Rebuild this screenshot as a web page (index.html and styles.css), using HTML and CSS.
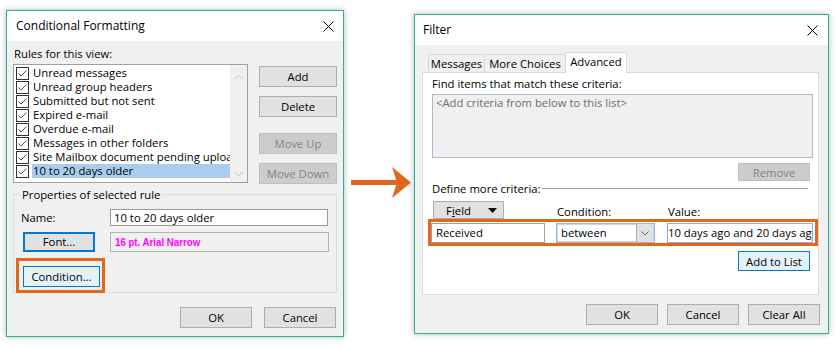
FILE: index.html
```html
<!DOCTYPE html>
<html>
<head>
<meta charset="utf-8">
<link rel="stylesheet" href="styles.css">
</head>
<body>
<div class="stage">
  <div class="dlg dlg-cf">
    <div class="titlebar">
      <span class="title">Conditional Formatting</span>
      <svg class="close" width="11" height="11" viewBox="0 0 11 11"><path d="M0.5 0.5 L10.5 10.5 M10.5 0.5 L0.5 10.5" stroke="#000" stroke-width="1" fill="none"/></svg>
    </div>
    <div class="cf-body">
      <div class="rules-lbl">Rules for this view:</div>
      <div class="rules-row">
        <div class="listbox">
          <ul class="items">
            <li><span class="chk"><svg width="11" height="11" viewBox="0 0 11 11"><path d="M1.5 5.5 L4 8 L9.5 2.5" stroke="#555" fill="none"/></svg></span><span class="txt">Unread messages</span></li>
            <li><span class="chk"><svg width="11" height="11" viewBox="0 0 11 11"><path d="M1.5 5.5 L4 8 L9.5 2.5" stroke="#555" fill="none"/></svg></span><span class="txt">Unread group headers</span></li>
            <li><span class="chk"><svg width="11" height="11" viewBox="0 0 11 11"><path d="M1.5 5.5 L4 8 L9.5 2.5" stroke="#555" fill="none"/></svg></span><span class="txt">Submitted but not sent</span></li>
            <li><span class="chk"><svg width="11" height="11" viewBox="0 0 11 11"><path d="M1.5 5.5 L4 8 L9.5 2.5" stroke="#555" fill="none"/></svg></span><span class="txt">Expired e-mail</span></li>
            <li><span class="chk"><svg width="11" height="11" viewBox="0 0 11 11"><path d="M1.5 5.5 L4 8 L9.5 2.5" stroke="#555" fill="none"/></svg></span><span class="txt">Overdue e-mail</span></li>
            <li><span class="chk"><svg width="11" height="11" viewBox="0 0 11 11"><path d="M1.5 5.5 L4 8 L9.5 2.5" stroke="#555" fill="none"/></svg></span><span class="txt">Messages in other folders</span></li>
            <li><span class="chk"><svg width="11" height="11" viewBox="0 0 11 11"><path d="M1.5 5.5 L4 8 L9.5 2.5" stroke="#555" fill="none"/></svg></span><span class="txt">Site Mailbox document pending upload</span></li>
            <li class="sel"><span class="chk"><svg width="11" height="11" viewBox="0 0 11 11"><path d="M1.5 5.5 L4 8 L9.5 2.5" stroke="#555" fill="none"/></svg></span><span class="txt">10 to 20 days older</span></li>
          </ul>
          <div class="vscroll">
            <svg width="9" height="6" viewBox="0 0 9 6"><path d="M0.5 5 L4.5 1 L8.5 5" stroke="#c2c2c2" fill="none"/></svg>
            <svg width="9" height="6" viewBox="0 0 9 6"><path d="M0.5 1 L4.5 5 L8.5 1" stroke="#c2c2c2" fill="none"/></svg>
          </div>
        </div>
        <div class="side-btns">
          <button class="btn b-add">Add</button>
          <button class="btn b-del">Delete</button>
          <button class="btn dis b-up">Move Up</button>
          <button class="btn dis b-down">Move Down</button>
        </div>
      </div>
      <fieldset class="group">
        <legend>Properties of selected rule</legend>
        <div class="prop-row name-row">
          <span class="plbl">Name:</span>
          <div class="edit">10 to 20 days older</div>
        </div>
        <div class="prop-row font-row">
          <span class="pcell"><button class="btn focus b-font">Font...</button></span>
          <div class="fontbox"><span class="narrow">16 pt. Arial Narrow</span></div>
        </div>
        <div class="hl-box cond-hl"><button class="btn def b-cond">Condition...</button></div>
      </fieldset>
      <div class="footer cf-footer">
        <button class="btn fbtn">OK</button>
        <button class="btn fbtn">Cancel</button>
      </div>
    </div>
  </div>

  <div class="arrow">
    <svg width="70" height="40" viewBox="0 0 70 40">
      <rect x="7" y="18" width="47" height="5" fill="#e2661b"/>
      <path d="M48 5 L67 20.5 L48 36 L53 20.5 Z" fill="#e2661b"/>
    </svg>
  </div>

  <div class="dlg dlg-filter">
    <div class="titlebar">
      <span class="title">Filter</span>
      <svg class="close" width="11" height="11" viewBox="0 0 11 11"><path d="M0.5 0.5 L10.5 10.5 M10.5 0.5 L0.5 10.5" stroke="#000" stroke-width="1" fill="none"/></svg>
    </div>
    <div class="f-body">
      <div class="tabs">
        <div class="tab t-msg">Messages</div>
        <div class="tab t-more">More Choices</div>
        <div class="tab active t-adv">Advanced</div>
      </div>
      <div class="panel">
        <div class="find-lbl">Find items that match these criteria:</div>
        <div class="crit-list">&lt;Add criteria from below to this list&gt;</div>
        <div class="rm-row"><button class="btn dis b-rm">Remove</button></div>
        <div class="define-row"><span>Define more criteria:</span><span class="rule"></span></div>
        <div class="hdr-row">
          <button class="btn b-field"><span class="field-txt">F<u>i</u>eld</span><svg width="9" height="5" viewBox="0 0 9 5"><path d="M0 0 L9 0 L4.5 5 Z" fill="#000"/></svg></button>
          <span class="hlbl">Condition:</span>
          <span class="hlbl">Value:</span>
        </div>
        <div class="hl-box crit-hl">
          <div class="inp inp-recv">Received</div>
          <div class="combo">
            <span class="combo-txt">between</span>
            <span class="combo-btn"><svg width="8" height="5" viewBox="0 0 8 5"><path d="M0.5 0.5 L4 4 L7.5 0.5" stroke="#606060" fill="none"/></svg></span>
          </div>
          <div class="inp inp-val">10 days ago and 20 days ago</div>
        </div>
        <div class="add-row"><button class="btn def b-addlist">Add to List</button></div>
      </div>
      <div class="footer f-footer">
        <button class="btn fbtn">OK</button>
        <button class="btn fbtn">Cancel</button>
        <button class="btn fbtn">Clear All</button>
      </div>
    </div>
  </div>
</div>
</body>
</html>
```

FILE: styles.css
```css
* { box-sizing: border-box; }

body {
  margin: 0;
  background: #ffffff;
  font-family: "Open Sans", "Noto Sans", sans-serif;
  font-size: 11.3px;
  line-height: 16px;
  color: #000;
}

.stage {
  display: flex;
  align-items: flex-start;
  padding: 10px 0 0 6px;
  width: 835px;
  height: 347px;
  overflow: hidden;
}

/* ---------- dialogs ---------- */
.dlg {
  border: 1px solid #2bb09a;
  background: #f0f0f0;
  box-shadow: 0 0 6px rgba(0, 0, 0, 0.28);
  display: flex;
  flex-direction: column;
  flex: none;
}
.dlg-cf { width: 338px; height: 327px; }
.dlg-filter { width: 415px; height: 320px; margin-top: 4px; }

.titlebar {
  flex: none;
  height: 30px;
  background: #fff;
  display: flex;
  align-items: center;
  justify-content: space-between;
  font-size: 12px;
}
.dlg-cf .titlebar { padding: 0 9px 0 9px; }
.dlg-filter .titlebar { padding: 0 10px 0 8px; }
.close { display: block; }

.arrow { width: 70px; margin-top: 152px; flex: none; }
.arrow svg { display: block; }

/* ---------- buttons ---------- */
.btn {
  font: inherit;
  margin: 0;
  padding: 0;
  border: 1px solid #adadad;
  background: #e1e1e1;
  color: #000;
  height: 21px;
  line-height: 18px;
  text-align: center;
  display: block;
}
.btn.dis { background: #cccccc; border-color: #bfbfbf; color: #838383; }
.btn.def { border-color: #0078d7; background: #e5f1fb; }
.btn.focus { border: 2px solid #0078d7; }

/* ---------- conditional formatting ---------- */
.cf-body {
  flex: 1;
  padding: 5px 6px 0 6px;
  display: flex;
  flex-direction: column;
}
.rules-lbl { height: 16px; padding-left: 1px; margin-bottom: 2px; }
.rules-row { display: flex; align-items: flex-start; height: 120px; }

.listbox {
  width: 235px;
  height: 119px;
  border: 1px solid #a0a0a0;
  background: #fff;
  display: flex;
  overflow: hidden;
}
.items {
  list-style: none;
  margin: 0;
  padding: 1px 0 0 0;
  flex: 1;
  min-width: 0;
}
.items li {
  height: 14px;
  display: flex;
  align-items: center;
}
.chk {
  flex: none;
  width: 13px;
  height: 13px;
  margin-left: 2px;
  border: 1px solid #333;
  background: #fff;
  display: flex;
}
.chk svg { display: block; }
.txt {
  flex: 1;
  min-width: 0;
  margin-left: 3px;
  padding-left: 1px;
  height: 14px;
  line-height: 14px;
  white-space: nowrap;
  overflow: hidden;
}
.items li.sel .txt { background: #a9cdee; }

.vscroll {
  flex: none;
  width: 17px;
  background: #f0f0f0;
  display: flex;
  flex-direction: column;
  justify-content: space-between;
  align-items: center;
  padding: 9px 0 5px 0;
}
.vscroll svg { display: block; }

.side-btns {
  margin-left: 11px;
  width: 78px;
  display: flex;
  flex-direction: column;
}
.side-btns .btn { width: 78px; }
.b-add { margin-top: 2px; }
.b-del { margin-top: 9px; }
.b-up { margin-top: 16px; }
.b-down { margin-top: 9px; }

.group {
  margin: 3px 0 0 0;
  padding: 0;
  border: 1px solid #dcdcdc;
  min-width: 0;
}
.group legend {
  margin-left: 6px;
  padding: 0 2px;
  line-height: 15px;
}
.prop-row {
  display: grid;
  grid-template-columns: 96px 218px;
  align-items: center;
}
.name-row { margin-top: 7px; height: 17px; }
.plbl { padding-left: 7px; }
.edit {
  height: 17px;
  border: 1px solid #9a9a9a;
  background: #fff;
  padding-left: 3px;
  line-height: 15px;
  white-space: nowrap;
}
.font-row { margin-top: 6px; height: 20px; grid-template-columns: 96px 219px; }
.b-font { margin-left: 9px; width: 72px; height: 20px; line-height: 16px; }
.fontbox {
  height: 20px;
  border: 1px solid #b4b4b4;
  background: #f0f0f0;
  padding-left: 4px;
  color: #ff00ff;
  font-family: "Liberation Sans", Arial, sans-serif;
  font-weight: bold;
  font-size: 11px;
  line-height: 18px;
  white-space: nowrap;
}
.narrow {
  display: inline-block;
  transform: scaleX(0.88);
  transform-origin: left center;
}

.hl-box { border: 3px solid #e2661b; }
.cond-hl {
  margin: 6px 0 -1px 2px;
  width: 89px;
  height: 35px;
  padding: 5px 0 0 4px;
}
.b-cond { width: 77px; height: 21px; }

.footer { display: flex; justify-content: flex-end; }
.cf-footer { margin-top: 14px; gap: 12px; padding-right: 1px; }
.fbtn { width: 72px; height: 21px; }

/* ---------- filter ---------- */
.f-body {
  flex: 1;
  padding: 7px 9px 0 7px;
  display: flex;
  flex-direction: column;
}
.tabs {
  display: flex;
  align-items: flex-end;
  height: 20px;
  margin-left: 6px;
  position: relative;
  z-index: 1;
}
.tab {
  height: 18px;
  border: 1px solid #d9d9d9;
  border-bottom: none;
  background: #f0f0f0;
  text-align: center;
  line-height: 18px;
  margin-right: -1px;
}
.t-msg { width: 57px; }
.t-more { width: 82px; }
.t-adv { width: 62px; }
.tab.active {
  height: 21px;
  margin-bottom: -1px;
  background: #fff;
  line-height: 17px;
}
.panel {
  height: 223px;
  border: 1px solid #d9d9d9;
  background: #fff;
  padding: 3px 5px 0 9px;
}
.find-lbl { height: 16px; margin-bottom: 2px; }
.crit-list {
  height: 64px;
  border: 1px solid #aab9cc;
  background: #f0f0f0;
  color: #6d6d6d;
  padding: 0 0 0 3px;
  line-height: 16px;
}
.rm-row { display: flex; justify-content: flex-end; margin-top: 5px; padding-right: 3px; }
.b-rm { width: 72px; height: 18px; line-height: 15px; }
.define-row {
  display: flex;
  align-items: center;
  height: 15px;
  line-height: 15px;
  margin-top: 0;
  padding-right: 5px;
}
.rule { flex: 1; height: 1px; background: #a0a0a0; margin-left: 1px; }

.hdr-row {
  display: grid;
  grid-template-columns: 124px 111px 1fr;
  align-items: end;
  margin-top: 5px;
  height: 18px;
}
.b-field {
  margin-left: 1px;
  width: 71px;
  height: 18px;
  line-height: 15px;
  display: flex;
  align-items: center;
  justify-content: center;
  gap: 17px;
  padding-left: 6px;
}
.b-field u { text-decoration-thickness: 1px; text-underline-offset: 1px; }
.b-field svg { display: block; }
.hlbl { line-height: 14px; padding-left: 1px; }

.crit-hl {
  margin: 0 -5px 0 -4px;
  height: 27px;
  padding: 1px 0 0 0;
  display: grid;
  grid-template-columns: 125px 111px 146px;
  align-items: start;
}
.inp {
  height: 20px;
  background: #fff;
  line-height: 18px;
  white-space: nowrap;
  overflow: hidden;
}
.inp-recv { width: 114px; border: 1px solid #a0a0a0; padding-left: 4px; }
.inp-val { width: 146px; border: 1px solid #7eb4ea; padding-left: 0; }
.combo {
  width: 99px;
  height: 20px;
  border: 1px solid #9fb6d3;
  box-shadow: inset 0 0 0 1px #c9d7e8;
  background: #fff;
  display: flex;
  align-items: center;
  padding: 1px;
}
.combo-txt { flex: 1; padding-left: 3px; line-height: 16px; }
.combo-btn {
  width: 17px;
  height: 18px;
  background: #e1e1e1;
  border-left: 1px solid #adadad;
  display: flex;
  align-items: center;
  justify-content: center;
}
.combo-btn svg { display: block; }

.add-row { display: flex; justify-content: flex-end; margin-top: 5px; padding-right: 3px; }
.b-addlist { width: 72px; height: 20px; line-height: 17px; }

.f-footer { margin-top: 9px; gap: 9px; margin-right: -1px; }
```
